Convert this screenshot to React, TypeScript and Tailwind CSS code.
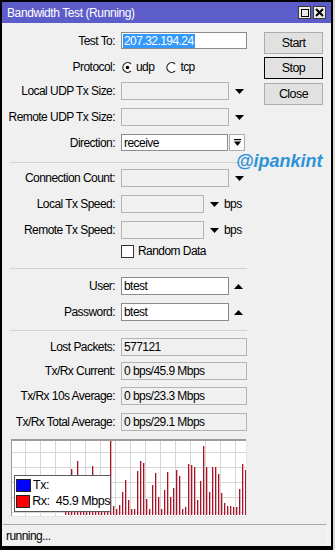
import React from "react";

const FONT = "font-['Liberation_Sans',Arial,sans-serif] text-[12px] tracking-[-0.55px] text-black";

const heights = [3,3,46,3,54,3,3,3,3,49,3,3,3,3,3,74,9,6,10,23,35,15,6,6,44,54,52,16,6,30,42,18,6,25,43,18,27,45,39,6,8,51,50,48,15,34,69,48,23,48,48,41,22,12,9,9,8,8,26,51,45];

function DownTri() {
  return (
    <svg width="9" height="5" viewBox="0 0 9 5" className="shrink-0">
      <polygon points="0,0 9,0 4.5,5" fill="#000" />
    </svg>
  );
}
function UpTri() {
  return (
    <svg width="9" height="5" viewBox="0 0 9 5" className="shrink-0">
      <polygon points="0,5 9,5 4.5,0" fill="#000" />
    </svg>
  );
}

function Label({ children }: { children: React.ReactNode }) {
  return <div className="w-[113px] shrink-0 text-right whitespace-nowrap">{children}</div>;
}

function Disabled({ w }: { w: string }) {
  return <div className={`h-[18px] ${w} border border-[#b3b3b3] bg-[#f0f0f0] shrink-0`} />;
}

function Radio({ on }: { on: boolean }) {
  return (
    <svg width="11" height="11" viewBox="0 0 11 11" className="shrink-0">
      <circle cx="5.5" cy="5.5" r="4.8" fill="#fff" />
      <path d="M9 2 A4.8 4.8 0 1 0 9 9" fill="none" stroke="#2a2a2a" strokeWidth="1.3" />
      {on && <circle cx="5.5" cy="5.5" r="1.8" fill="#000" />}
    </svg>
  );
}

function ReadOnly({ text }: { text: string }) {
  return (
    <div className="ml-[6px] h-[18px] w-[126px] border border-[#b3b3b3] bg-[#f0f0f0] pl-[2px] flex items-center whitespace-nowrap">
      {text}
    </div>
  );
}

function Graph() {
  const vlines = [];
  for (let k = 0; 14 + 15 * k < 236; k++) vlines.push(14 + 15 * k + 0.5);
  const hlines = [13.5, 28.5, 43.5, 58.5, 73.5];
  return (
    <div className="relative ml-[9px] mt-[8px] w-[236px] h-[78px]">
      <svg width="236" height="78" viewBox="0 0 236 78" className="block">
        <rect x="0" y="0" width="236" height="78" fill="#fff" />
        {vlines.map((x) => (
          <line key={"v" + x} x1={x} y1="0" x2={x} y2="78" stroke="#d6d6d6" strokeWidth="1" />
        ))}
        {hlines.map((y) => (
          <line key={"h" + y} x1="0" y1={y} x2="236" y2={y} stroke="#d6d6d6" strokeWidth="1" />
        ))}
        {heights.map((h, i) => {
          const x = 54 + 3 * i;
          return (
            <g key={i}>
              <rect x={x} y={76 - h} width="1" height={h} fill="#a3162a" />
              <rect x={x + 1} y={76 - h} width="1" height={h} fill="#e7b0b6" />
            </g>
          );
        })}
        <rect x="0" y="0" width="236" height="2" fill="#9c9c9c" />
        <rect x="0" y="0" width="1" height="78" fill="#9c9c9c" />
        <rect x="235" y="0" width="1" height="78" fill="#e6e6e6" />
        <rect x="0" y="77" width="236" height="1" fill="#e6e6e6" />
      </svg>
      <div className="absolute left-[3px] top-[36px] w-[97px] h-[37px] bg-white border border-[#5a5a5a] flex flex-col pl-[1px] pt-[2px] gap-[2px] text-[12.5px] tracking-[-0.45px]">
        <div className="flex items-center h-[14px]">
          <div className="w-[15px] h-[13px] bg-[#0000ff] border border-[#222]" />
          <span className="ml-[2px]">Tx:</span>
        </div>
        <div className="flex items-center h-[14px]">
          <div className="w-[15px] h-[13px] bg-[#ff0000] border border-[#222]" />
          <span className="ml-[2px] whitespace-pre">Rx:  45.9 Mbps</span>
        </div>
      </div>
    </div>
  );
}

function Btn({ label, active }: { label: string; active?: boolean }) {
  return (
    <div
      className={`h-[22px] w-[59px] flex items-center justify-center bg-[#e1e1e1] border ${
        active ? "border-black" : "border-[#adadad]"
      } text-[12.5px]`}
    >
      {label}
    </div>
  );
}

export default function App() {
  return (
    <div className={`w-[335px] h-[550px] flex bg-[#dcdcdc] ${FONT}`}>
      <div className="relative w-[333px] h-[550px] border-l-2 border-t-2 border-r-2 border-b-4 border-black bg-[#f0f0f0] flex flex-col">
        {/* title bar */}
        <div className="h-[21px] bg-[#5d5dca] flex items-center pl-[5px] pr-[5px] shrink-0">
          <span className="text-white text-[12px] tracking-[-0.4px] flex-1">Bandwidth Test (Running)</span>
          <div className="flex gap-[2px]">
            <div className="w-[13px] h-[13px] bg-[#ececec] border border-[#3a3a3a] flex items-center justify-center">
              <div className="w-[8px] h-[8px] border-[1.5px] border-black" />
            </div>
            <div className="w-[13px] h-[13px] bg-[#ececec] border border-[#3a3a3a] flex items-center justify-center">
              <svg width="9" height="9" viewBox="0 0 9 9">
                <path d="M1 1 L8 8 M8 1 L1 8" stroke="#000" strokeWidth="2" />
              </svg>
            </div>
          </div>
        </div>

        {/* body */}
        <div className="flex">
          <div className="w-[248px] flex flex-col">
            {/* Test To */}
            <div className="flex items-center h-[17px] mt-[9px]">
              <Label>Test To:</Label>
              <div className="ml-[6px] h-[17px] w-[126px] bg-white border border-[#8c8c8c] flex items-center pl-[1px]">
                <span className="bg-[#3399ff] text-white px-[1px] leading-[14px]">207.32.194.24</span>
              </div>
            </div>
            {/* Protocol */}
            <div className="flex items-center h-[18px] mt-[9px]">
              <Label>Protocol:</Label>
              <div className="ml-[7px] flex items-center">
                <Radio on />
                <span className="ml-[3px]">udp</span>
                <span className="ml-[12px]"><Radio on={false} /></span>
                <span className="ml-[3px]">tcp</span>
              </div>
            </div>
            {/* Local UDP */}
            <div className="flex items-center h-[18px] mt-[6px]">
              <Label>Local UDP Tx Size:</Label>
              <div className="ml-[6px]"><Disabled w="w-[108px]" /></div>
              <div className="ml-[6px]"><DownTri /></div>
            </div>
            {/* Remote UDP */}
            <div className="flex items-center h-[18px] mt-[8px]">
              <Label>Remote UDP Tx Size:</Label>
              <div className="ml-[6px]"><Disabled w="w-[108px]" /></div>
              <div className="ml-[6px]"><DownTri /></div>
            </div>
            {/* Direction */}
            <div className="flex items-center h-[17px] mt-[8px]">
              <Label>Direction:</Label>
              <div className="ml-[6px] h-[17px] w-[107px] bg-white border border-[#8c8c8c] flex items-center pl-[2px]">receive</div>
              <div className="ml-[1px] h-[17px] w-[16px] bg-[#fbfbfb] border border-[#adadad] flex items-center justify-center">
                <svg width="7" height="7" viewBox="0 0 7 7">
                  <rect x="0" y="0" width="7" height="1.2" fill="#000" />
                  <polygon points="0,2.5 7,2.5 3.5,7" fill="#000" />
                </svg>
              </div>
            </div>
            <div className="mt-[11px] ml-[8px] w-[237px] h-[1px] bg-[#d2d2d2]" />
            {/* Connection Count */}
            <div className="flex items-center h-[18px] mt-[6px]">
              <Label>Connection Count:</Label>
              <div className="ml-[6px]"><Disabled w="w-[108px]" /></div>
              <div className="ml-[6px]"><DownTri /></div>
            </div>
            {/* Local Tx Speed */}
            <div className="flex items-center h-[18px] mt-[8px]">
              <Label>Local Tx Speed:</Label>
              <div className="ml-[6px]"><Disabled w="w-[83px]" /></div>
              <div className="ml-[6px]"><DownTri /></div>
              <span className="ml-[5px]">bps</span>
            </div>
            {/* Remote Tx Speed */}
            <div className="flex items-center h-[18px] mt-[8px]">
              <Label>Remote Tx Speed:</Label>
              <div className="ml-[6px]"><Disabled w="w-[83px]" /></div>
              <div className="ml-[6px]"><DownTri /></div>
              <span className="ml-[5px]">bps</span>
            </div>
            {/* Random Data */}
            <div className="flex items-center h-[14px] mt-[5px]">
              <div className="w-[113px] shrink-0" />
              <div className="ml-[6px] w-[13px] h-[13px] bg-white border border-[#333]" />
              <span className="ml-[4px]">Random Data</span>
            </div>
            <div className="mt-[10px] ml-[8px] w-[237px] h-[1px] bg-[#d2d2d2]" />
            {/* User */}
            <div className="flex items-center h-[18px] mt-[8px]">
              <Label>User:</Label>
              <div className="ml-[6px] h-[18px] w-[108px] bg-white border border-[#8c8c8c] flex items-center pl-[2px]">btest</div>
              <div className="ml-[5px]"><UpTri /></div>
            </div>
            {/* Password */}
            <div className="flex items-center h-[18px] mt-[8px]">
              <Label>Password:</Label>
              <div className="ml-[6px] h-[18px] w-[108px] bg-white border border-[#8c8c8c] flex items-center pl-[2px]">btest</div>
              <div className="ml-[5px]"><UpTri /></div>
            </div>
            <div className="mt-[9px] ml-[8px] w-[237px] h-[1px] bg-[#d2d2d2]" />
            <div className="flex items-center h-[18px] mt-[7px]">
              <Label>Lost Packets:</Label>
              <ReadOnly text="577121" />
            </div>
            <div className="flex items-center h-[18px] mt-[6px]">
              <Label>Tx/Rx Current:</Label>
              <ReadOnly text="0 bps/45.9 Mbps" />
            </div>
            <div className="flex items-center h-[18px] mt-[7px]">
              <Label>Tx/Rx 10s Average:</Label>
              <ReadOnly text="0 bps/23.3 Mbps" />
            </div>
            <div className="flex items-center h-[18px] mt-[8px]">
              <Label>Tx/Rx Total Average:</Label>
              <ReadOnly text="0 bps/29.1 Mbps" />
            </div>
            <Graph />
          </div>
          <div className="ml-[14px] pt-[9px] flex flex-col">
            <Btn label="Start" />
            <div className="mt-[3px]"><Btn label="Stop" active /></div>
            <div className="mt-[4px]"><Btn label="Close" /></div>
          </div>
        </div>

        {/* status bar */}
        <div className="mt-[7px] ml-[1px] w-[324px] h-[22px] border-t border-[#a8a8a8] border-r border-r-[#fafafa] flex items-center pl-[3px]">
          running...
        </div>

        {/* watermark */}
        <div className="absolute left-[234px] top-[146px] text-[18px] font-bold italic tracking-[0px] text-[#2b93d6] font-['Liberation_Sans',Arial,sans-serif]">
          @ipankint
        </div>
      </div>
      <div className="w-[2px] h-[550px] bg-[#d8d8d8]" />
    </div>
  );
}
